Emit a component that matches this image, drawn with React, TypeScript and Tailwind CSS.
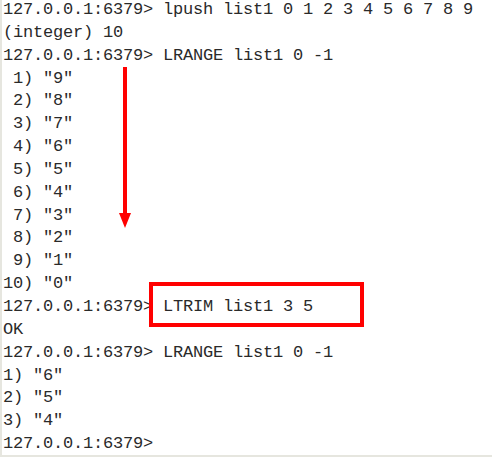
import React from 'react';

const lines = [
  '127.0.0.1:6379> lpush list1 0 1 2 3 4 5 6 7 8 9',
  '(integer) 10',
  '127.0.0.1:6379> LRANGE list1 0 -1',
  ' 1) "9"',
  ' 2) "8"',
  ' 3) "7"',
  ' 4) "6"',
  ' 5) "5"',
  ' 6) "4"',
  ' 7) "3"',
  ' 8) "2"',
  ' 9) "1"',
  '10) "0"',
  '127.0.0.1:6379> LTRIM list1 3 5',
  'OK',
  '127.0.0.1:6379> LRANGE list1 0 -1',
  '1) "6"',
  '2) "5"',
  '3) "4"',
  '127.0.0.1:6379>',
];

export default function App() {
  return (
    <div className="relative w-[492px] h-[457px] overflow-hidden bg-white border-l-2 border-b-2 border-[#e6e6df]">
      {/* console output */}
      <div className="pl-px -mt-[1px] font-['Liberation_Mono',monospace] text-[17px] tracking-[-0.2px] leading-[22.85px] text-[#2a2a2a] whitespace-pre">
        {lines.map((l, i) => (
          <div key={i}>{l}</div>
        ))}
      </div>

      {/* red annotation box around LTRIM */}
      <div className="absolute left-[147px] top-[282px] w-[215px] h-[45px] border-4 border-[#ff0000]" />

      {/* red arrow pointing down */}
      <svg className="absolute left-[116px] top-[66px]" width="14" height="164" viewBox="0 0 14 164">
        <rect x="5" y="1" width="4" height="150" fill="#ff0000" />
        <polygon points="1,147 13,147 7,162" fill="#ff0000" />
      </svg>
    </div>
  );
}
